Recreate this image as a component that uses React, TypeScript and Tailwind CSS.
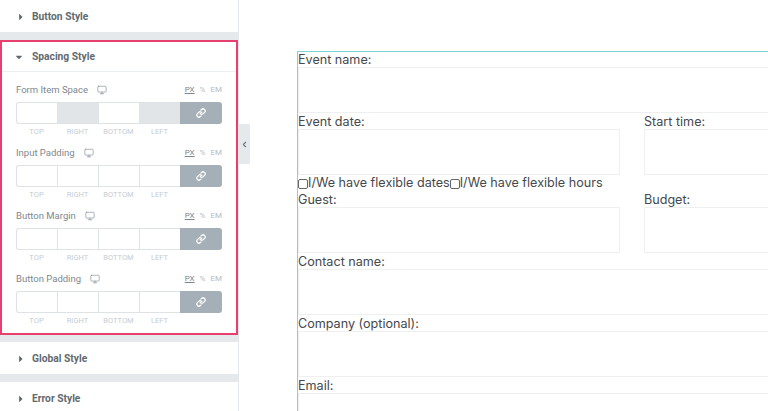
import { FaCaretDown, FaCaretRight } from "react-icons/fa"
import { ChevronLeft, Link, Monitor } from "lucide-react"

function CollapsedSection({ title }: { title: string }) {
  return (
    <div className="flex h-8 items-center bg-white pl-[17px] pt-[2px]">
      <FaCaretRight className="w-[8px] h-[10px] text-[#616a70]" />
      <span className="ml-[7px] text-[10.25px] font-bold text-[#616a70]">{title}</span>
    </div>
  )
}

function SpacingControl({ label, disabled }: { label: string; disabled?: boolean }) {
  const sides = ["TOP", "RIGHT", "BOTTOM", "LEFT"]

  return (
    <div className="h-[63px]">
      <div className="flex h-[14px] items-center justify-between">
        <div className="flex items-center">
          <span className="text-[9.5px] text-[#7d8790]">{label}</span>
          <Monitor className="ml-[9px] w-[10px] h-[10px] text-[#7d8790]" strokeWidth={1.5} />
        </div>
        <div className="flex items-center gap-[5px] text-[8px] text-[#b4bcc3]">
          <span className="underline text-[#7d8790]">PX</span>
          <span>%</span>
          <span>EM</span>
        </div>
      </div>
      <div className="mt-[5px] flex h-[22px]">
        {sides.map((side, i) => (
          <input
            key={side}
            aria-label={side}
            className={`w-[41px] border-y border-l border-[#dfe3e6] outline-none ${i === 0 ? "rounded-l-[3px]" : ""} ${
              disabled && i % 2 === 1 ? "bg-[#e2e5e8]" : "bg-white"
            }`}
          />
        ))}
        <div className="flex w-[42px] items-center justify-center rounded-r-[3px] bg-[#a4afb7]">
          <Link className="w-[10px] h-[10px] text-white" strokeWidth={3} />
        </div>
      </div>
      <div className="mt-[2px] flex text-[7.5px] text-[#c6ccd1]">
        {sides.map((side) => (
          <span key={side} className="w-[41px] text-center">
            {side}
          </span>
        ))}
      </div>
    </div>
  )
}

function Sidebar() {
  return (
    <div className="w-[239px] shrink-0 border-r border-[#e6e9ec] bg-white font-['Roboto',sans-serif]">
      <CollapsedSection title="Button Style" />
      <div className="h-2 bg-[#e6e9ec]" />
      <div className="h-[295px] border-2 border-[#e8406e] bg-white">
        <div className="flex h-[30px] items-center border-b border-[#eceff1] pl-[12px]">
          <FaCaretDown className="w-[10px] h-[10px] text-[#616a70]" />
          <span className="ml-[8px] text-[10.25px] font-bold text-[#616a70]">Spacing Style</span>
        </div>
        <div className="px-[14px] pt-[11px]">
          <SpacingControl label="Form Item Space" disabled />
          <SpacingControl label="Input Padding" />
          <SpacingControl label="Button Margin" />
          <SpacingControl label="Button Padding" />
        </div>
      </div>
      <div className="h-[7px] bg-[#e6e9ec]" />
      <CollapsedSection title="Global Style" />
      <div className="h-2 bg-[#e6e9ec]" />
      <CollapsedSection title="Error Style" />
    </div>
  )
}

function Field({ label, first }: { label: string; first?: boolean }) {
  return (
    <div>
      <div className={first ? "h-[15px] leading-4" : "h-4 leading-[18px]"}>{label}</div>
      <input aria-label={label} className="block h-[46px] w-full border border-[#eef0ef] bg-white outline-none" />
    </div>
  )
}

function EventForm() {
  return (
    <div className="ml-[58px] mt-[51px] h-[360px] w-[671px] shrink-0 border-l border-t border-[#7fd4d6] font-['Inter',sans-serif] text-[12.6px] text-[#45494c]">
      <Field label="Event name:" first />
      <div className="grid grid-cols-[322px_322px] gap-x-6">
        <Field label="Event date:" />
        <Field label="Start time:" />
      </div>
      <div className="flex h-4 items-center pt-[1px]">
        <input type="checkbox" className="h-[10px] w-[10px] appearance-none rounded-[2px] border border-[#666]" />
        <span>I/We have flexible dates</span>
        <input type="checkbox" className="h-[10px] w-[10px] appearance-none rounded-[2px] border border-[#666]" />
        <span>I/We have flexible hours</span>
      </div>
      <div className="grid grid-cols-[322px_322px] gap-x-6">
        <Field label="Guest:" />
        <Field label="Budget:" />
      </div>
      <Field label="Contact name:" />
      <Field label="Company (optional):" />
      <Field label="Email:" />
    </div>
  )
}

export default function App() {
  return (
    <div className="relative flex h-[411px] w-[768px] overflow-hidden bg-white">
      <Sidebar />
      <div className="absolute left-[239px] top-[124px] flex h-10 w-[11px] items-center justify-center bg-[#e6e9ec]">
        <ChevronLeft className="w-[9px] h-[9px] text-[#6d7882]" strokeWidth={3} />
      </div>
      <EventForm />
    </div>
  )
}
